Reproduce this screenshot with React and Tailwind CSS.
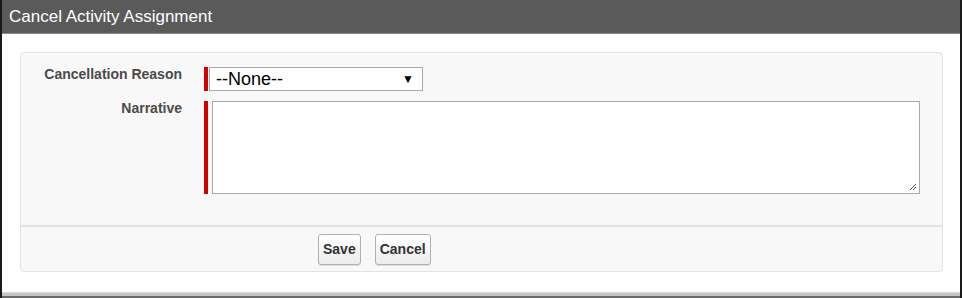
const App = () => {
  return (
    <div className="w-[962px] h-[298px] flex flex-col bg-white border-l-2 border-r-2 border-[#1a1a1a] font-['Liberation_Sans',Arial,sans-serif]">
      {/* Header */}
      <div className="h-[34px] bg-[#5a5a5a] border-b border-[#8a8a8a] flex items-center px-[7px] shrink-0">
        <span className="text-white text-[17px] leading-none">Cancel Activity Assignment</span>
      </div>

      {/* Body */}
      <div className="flex-1 pt-[18px] pl-[18px] pr-[17px]">
        <div className="bg-[#f8f8f8] border border-[#e3e3e3] rounded-[4px] h-[220px] flex flex-col">
          <div className="flex-1 pt-[14px] pr-[22px] border-b-2 border-[#e3e3e3]">
            <div className="flex items-start h-[24px]">
              <label className="w-[161px] text-right text-[14px] font-bold text-[#4a4a4a] leading-[16px] -mt-[1px]">Cancellation Reason</label>
              <div className="ml-[22px] flex h-[24px]">
                <div className="w-[4px] bg-[#d40000]"></div>
                <div className="ml-[1px] w-[214px] h-[24px] bg-white border border-[#a9a9a9] flex items-center justify-between pl-[6px] pr-[8px]">
                  <span className="text-[18px] text-black leading-none">--None--</span>
                  <span className="text-[12px] text-black leading-none">▼</span>
                </div>
              </div>
            </div>
            <div className="flex mt-[10px]">
              <label className="w-[161px] text-right text-[14px] font-bold text-[#4a4a4a] leading-[16px] -mt-[1px]">Narrative</label>
              <div className="ml-[22px] flex flex-1 h-[93px]">
                <div className="w-[4px] bg-[#d40000]"></div>
                <div className="ml-[4px] flex-1 relative bg-white border border-[#a9a9a9]">
                  <svg className="absolute right-[2px] bottom-[2px]" width="8" height="8" viewBox="0 0 8 8">
                    <path d="M7 1 L1 7 M7 4 L4 7" stroke="#555" strokeWidth="1" fill="none" />
                  </svg>
                </div>
              </div>
            </div>
          </div>
          <div className="h-[44px] flex items-center pl-[297px] gap-[14px] shrink-0">
            <button className="h-[31px] px-[4px] text-[14px] font-bold text-[#333] rounded-[3px] border border-[#b0b0b0] bg-gradient-to-b from-white to-[#ececec] shadow-[0_1px_0_#ddd]">Save</button>
            <button className="h-[31px] px-[4px] text-[14px] font-bold text-[#333] rounded-[3px] border border-[#b0b0b0] bg-gradient-to-b from-white to-[#ececec] shadow-[0_1px_0_#ddd]">Cancel</button>
          </div>
        </div>
      </div>

      {/* Bottom scroll strip */}
      <div className="h-[6px] shrink-0 bg-[#c4c4c4] border-t border-[#d8d8d8] border-b-2 border-b-[#6a6a6a]"></div>
    </div>
  );
};

export default App;
